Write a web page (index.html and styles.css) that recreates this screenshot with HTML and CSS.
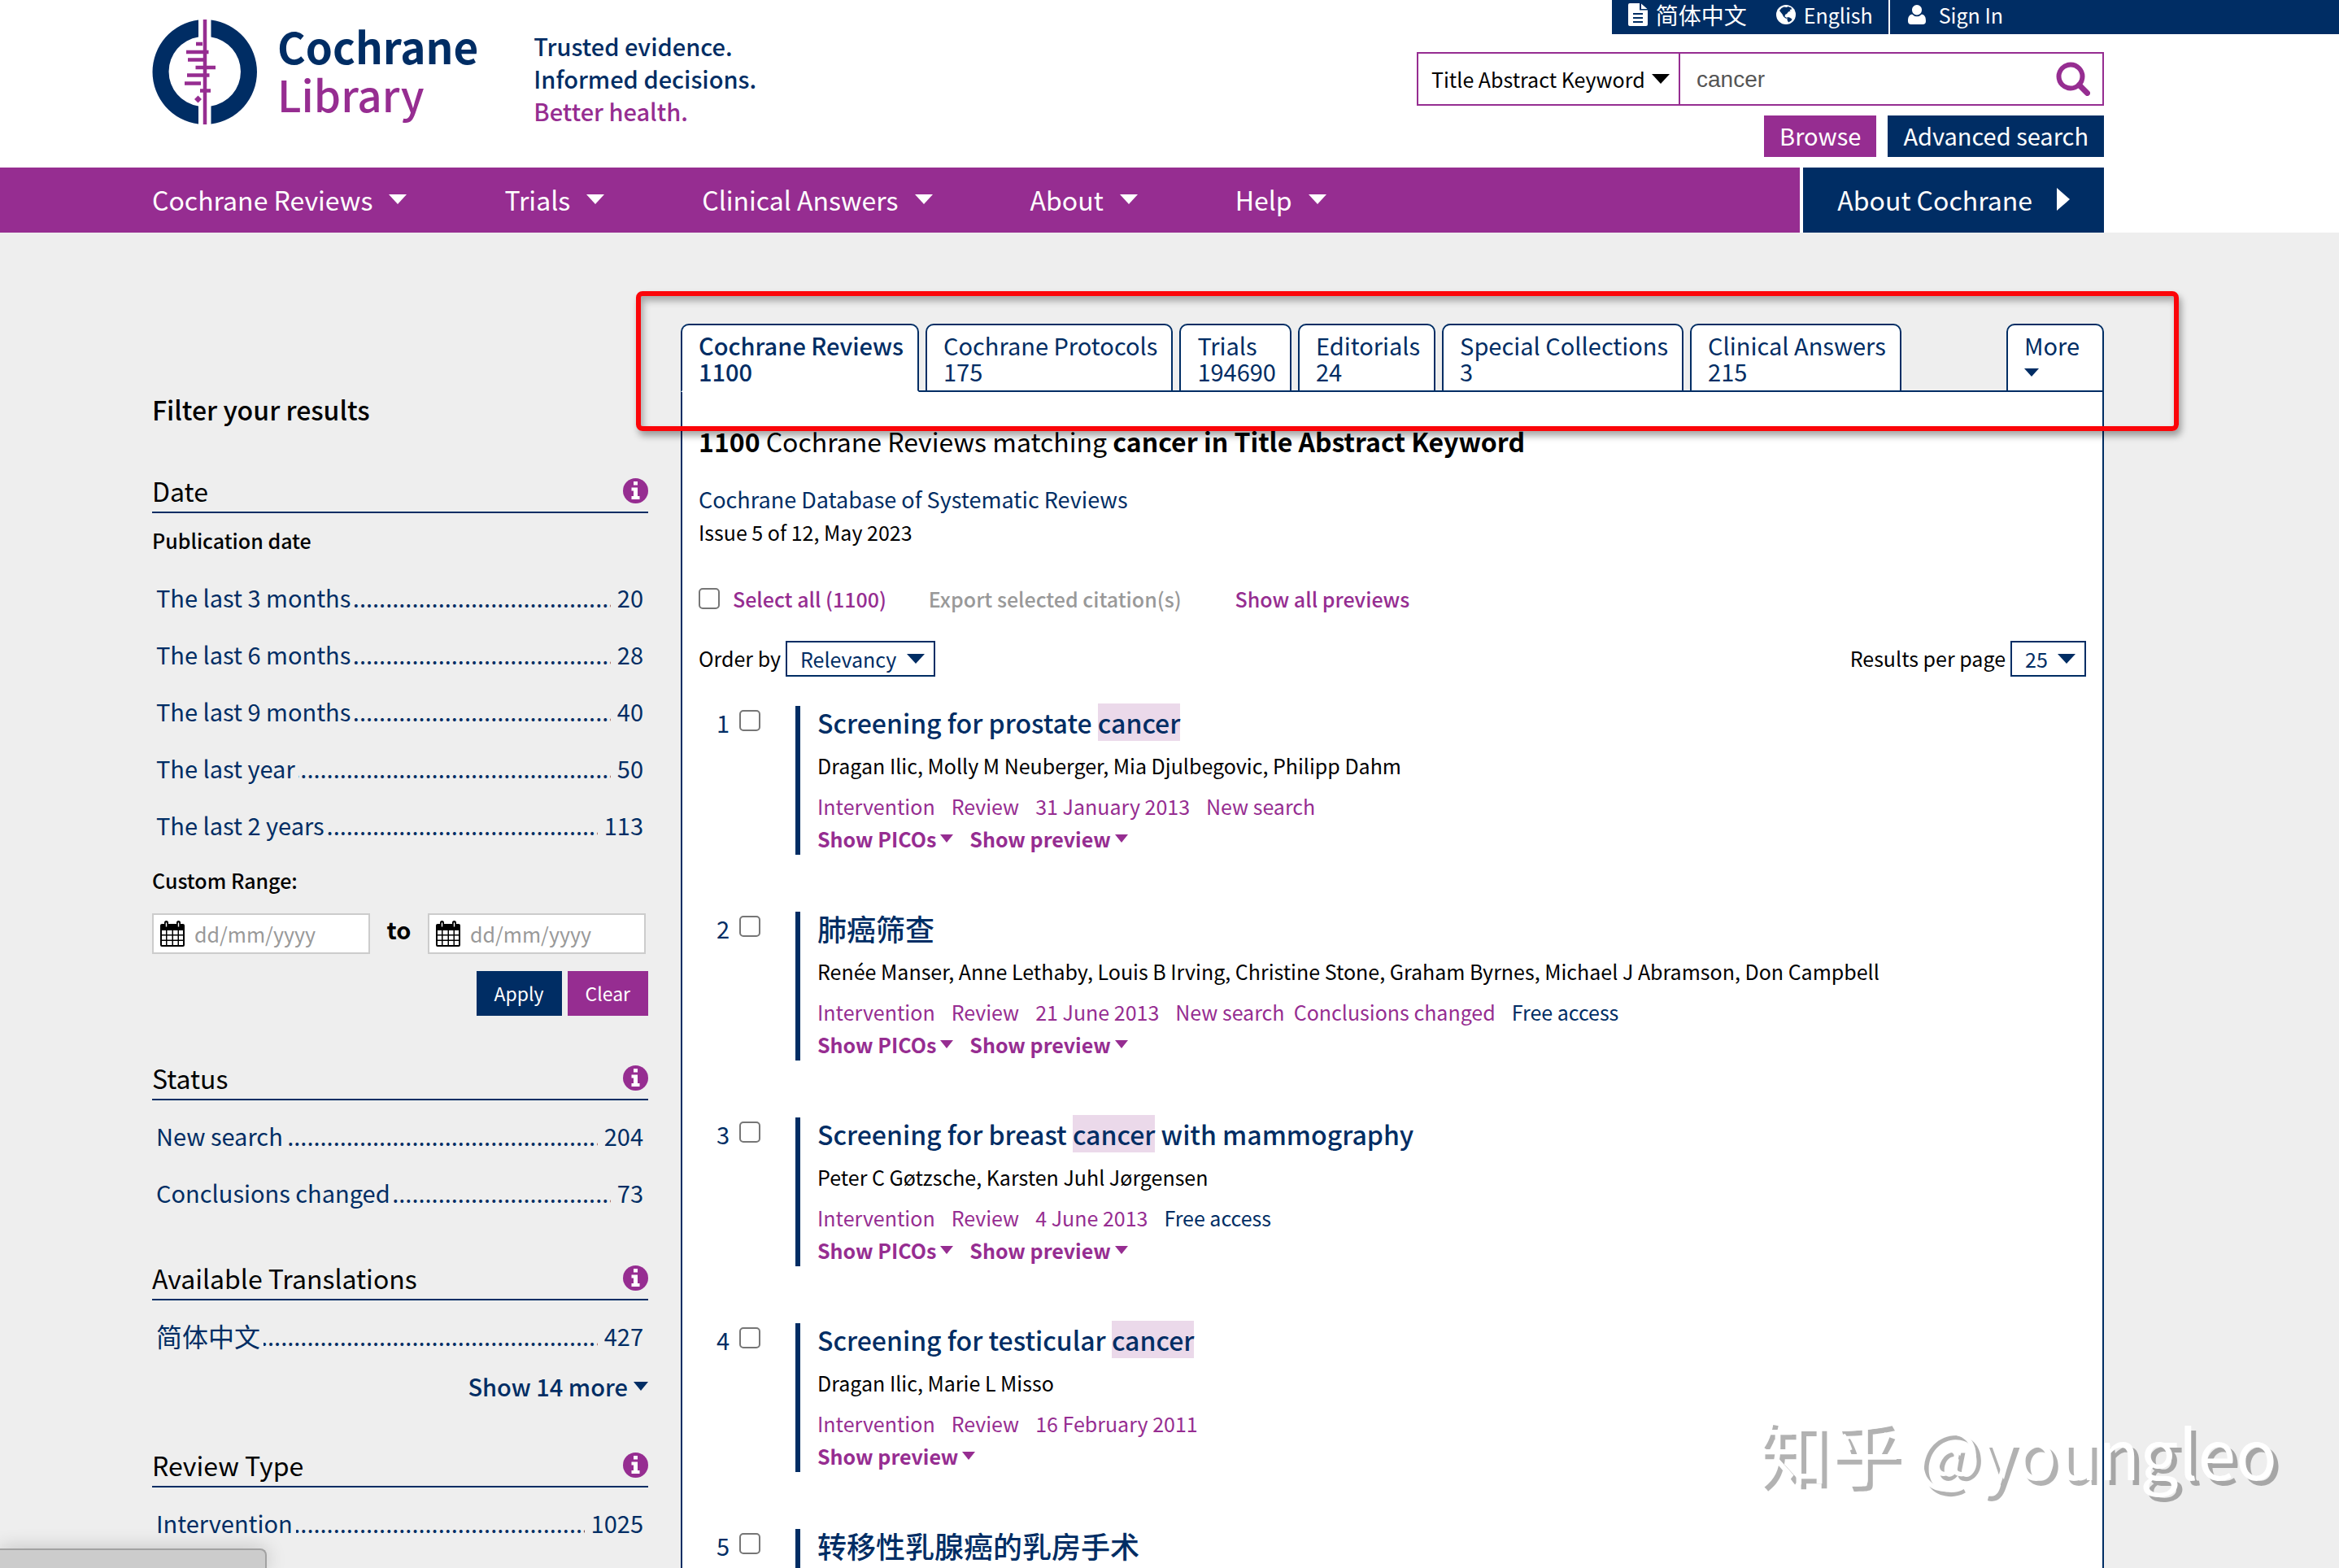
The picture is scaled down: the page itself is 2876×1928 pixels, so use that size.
FILE: index.html
```html
<!DOCTYPE html>
<html lang="en">
<head>
  <meta charset="utf-8">
  <title>Search results | Cochrane Library</title>
  <link rel="stylesheet" href="styles.css">
</head>
<body>
  <!-- shared icons -->
  <svg class="sprite" aria-hidden="true">
    <symbol id="info" viewBox="0 0 31 31">
      <circle cx="15.5" cy="15.5" r="15.5" fill="#962d91"/>
      <path d="M13 4h5v4.5h-5zM10.5 11.5h7.5v10.5h2.500v4h-10v-4h2.500v-6.500h-2.500z" fill="#fff"/>
    </symbol>
    <symbol id="calendar" viewBox="0 0 30 32">
      <path fill-rule="evenodd" d="M2 4h3V2.500a2.500 2.500 0 0 1 5 0V4h10V2.500a2.500 2.500 0 0 1 5 0V4h3a2 2 0 0 1 2 2v24a2 2 0 0 1-2 2H2a2 2 0 0 1-2-2V6a2 2 0 0 1 2-2zM2 12v5h5v-5zM8.500 12v5h6v-5zM16 12v5h5.500v-5zM23 12v5h5v-5zM2 18.500v5h5v-5zM8.500 18.500v5h6v-5zM16 18.500v5h5.500v-5zM23 18.500v5h5v-5zM2 25v5h5v-5zM8.500 25v5h6v-5zM16 25v5h5.500v-5zM23 25v5h5v-5zM6.800 2.500v5h1.400v-5zM21.800 2.500v5h1.400v-5z"/>
    </symbol>
  </svg>

  <header class="header">
    <a class="logo" href="#">
      <svg class="logo-mark" width="130" height="130" viewBox="0 0 130 130" aria-hidden="true">
        <path fill="#002d64" d="M57 .5A64.500 64.500 0 0 0 57 128.500V106.500A43 43 0 0 1 57 21.500zM72.500 .5A64.500 64.500 0 0 1 72.500 128.500V106.500A43 43 0 0 0 72.500 21.500z"/>
        <path stroke="#962d91" stroke-width="4.500" fill="none" d="M65 0V129M54 30H62M42 40H69.500M44 49.500H65M53.500 59H78M43 68.500H70.500M40 78.500H60M59 87.500H72"/>
        <path fill="#962d91" d="M56.500 93.500l4.500 4.500-4.500 4.500-4.500-4.500z"/>
      </svg>
      <span class="logo-text">Cochrane<br><span class="logo-library">Library</span></span>
    </a>
    <p class="tagline">Trusted evidence.<br>Informed decisions.<br><span class="purple">Better health.</span></p>

    <div class="header-right">
      <nav class="topbar" aria-label="Account">
        <a class="topbar-item" href="#">
          <svg width="24" height="28" viewBox="0 0 24 28" aria-hidden="true"><path fill="#fff" fill-rule="evenodd" d="M2 0h12v8.500h10V26a2 2 0 0 1-2 2H2a2 2 0 0 1-2-2V2a2 2 0 0 1 2-2zM16 .500L23.500 7H16zM6 12v2h12v-2zM6 17v2h12v-2zM6 22v2h12v-2z"/></svg>
          <span class="cjk-small">简体中文</span>
        </a>
        <a class="topbar-item topbar-lang" href="#">
          <svg width="24" height="24" viewBox="0 0 24 24" aria-hidden="true"><circle cx="12" cy="12" r="12" fill="#fff"/><path fill="#002d64" d="M6.500 4l3-1.500 3.500.5 1.500-1 4 1.500.5 2-2.500.5 1 1.500-2.500 1-2 2.500-2 1-.5 2.500 2 1 1 1.500-2-.5-2.500-2-1.500-3-2-2.500-1.500-2zM13.500 15l3 .5 3 2-1 2-3.500 2-1.500-3z"/></svg>
          <span>English</span>
        </a>
        <a class="topbar-item topbar-sign" href="#">
          <svg width="22" height="24" viewBox="0 0 22 24" aria-hidden="true"><path fill="#fff" d="M11 0a6 6 0 0 1 6 6.500a6 6 0 0 1-12 0A6 6 0 0 1 11 0zM5 11.500a8 8 0 0 0 12 0c4 1 5 4 5 8.500a4 4 0 0 1-4 4H4a4 4 0 0 1-4-4c0-4.500 1-7.500 5-8.500z"/></svg>
          <span>Sign In</span>
        </a>
      </nav>
      <form class="search">
        <div class="select-wrap search-field">
          <select class="search-select" aria-label="Search in">
            <option>Title Abstract Keyword</option>
          </select>
          <i class="caret"></i>
        </div>
        <input class="search-input" type="text" value="cancer" aria-label="Search term">
        <button class="search-btn" type="button" aria-label="Search">
          <svg width="42" height="42" viewBox="0 0 42 42" aria-hidden="true"><circle cx="18" cy="18" r="14.500" fill="none" stroke="#962d91" stroke-width="6"/><path d="M28.500 28.500L38.500 38.500" stroke="#962d91" stroke-width="7" stroke-linecap="round"/></svg>
        </button>
      </form>
      <div class="search-links">
        <a class="btn btn-purple" href="#">Browse</a>
        <a class="btn" href="#">Advanced search</a>
      </div>
    </div>
  </header>

  <div class="nav-row">
    <nav class="nav" aria-label="Main">
      <a href="#">Cochrane Reviews <i class="caret"></i></a>
      <a href="#">Trials <i class="caret"></i></a>
      <a href="#">Clinical Answers <i class="caret"></i></a>
      <a href="#">About <i class="caret"></i></a>
      <a href="#">Help <i class="caret"></i></a>
    </nav>
    <a class="nav-about" href="#">About Cochrane <i class="caret-right"></i></a>
  </div>

  <div class="content">
    <aside class="sidebar">
      <h2 class="filter-title">Filter your results</h2>

      <section class="facet">
        <h3 class="facet-title">Date <svg class="info"><use href="#info"/></svg></h3>
        <h4 class="facet-label">Publication date</h4>
        <ul class="facet-list">
          <li><a href="#"><span>The last 3 months</span><span>20</span></a></li>
          <li><a href="#"><span>The last 6 months</span><span>28</span></a></li>
          <li><a href="#"><span>The last 9 months</span><span>40</span></a></li>
          <li><a href="#"><span>The last year</span><span>50</span></a></li>
          <li><a href="#"><span>The last 2 years</span><span>113</span></a></li>
        </ul>
        <h4 class="facet-label">Custom Range:</h4>
        <form class="range">
          <div class="range-fields">
            <label class="date"><svg class="calendar"><use href="#calendar"/></svg><input type="text" placeholder="dd/mm/yyyy" aria-label="From date"></label>
            <span class="range-to">to</span>
            <label class="date"><svg class="calendar"><use href="#calendar"/></svg><input type="text" placeholder="dd/mm/yyyy" aria-label="To date"></label>
          </div>
          <div class="range-actions">
            <button class="range-btn" type="button">Apply</button>
            <button class="range-btn btn-purple" type="button">Clear</button>
          </div>
        </form>
      </section>

      <section class="facet">
        <h3 class="facet-title">Status <svg class="info"><use href="#info"/></svg></h3>
        <ul class="facet-list">
          <li><a href="#"><span>New search</span><span>204</span></a></li>
          <li><a href="#"><span>Conclusions changed</span><span>73</span></a></li>
        </ul>
      </section>

      <section class="facet">
        <h3 class="facet-title">Available Translations <svg class="info"><use href="#info"/></svg></h3>
        <ul class="facet-list">
          <li><a href="#"><span class="cjk">简体中文</span><span>427</span></a></li>
        </ul>
        <a class="show-more" href="#">Show 14 more <i class="caret"></i></a>
      </section>

      <section class="facet">
        <h3 class="facet-title">Review Type <svg class="info"><use href="#info"/></svg></h3>
        <ul class="facet-list">
          <li><a href="#"><span>Intervention</span><span>1025</span></a></li>
        </ul>
      </section>
    </aside>

    <main class="main">
      <nav class="tabs" aria-label="Result types">
        <a class="tab active" href="#">Cochrane Reviews<br>1100</a>
        <a class="tab" href="#">Cochrane Protocols<br>175</a>
        <a class="tab" href="#">Trials<br>194690</a>
        <a class="tab" href="#">Editorials<br>24</a>
        <a class="tab" href="#">Special Collections<br>3</a>
        <a class="tab" href="#">Clinical Answers<br>215</a>
        <a class="tab tab-more" href="#">More<br><i class="caret"></i></a>
      </nav>

      <div class="panel">
        <h1 class="summary"><b>1100</b> Cochrane Reviews matching <b>cancer in Title Abstract Keyword</b></h1>
        <a class="database" href="#">Cochrane Database of Systematic Reviews</a>
        <p class="issue">Issue 5 of 12, May 2023</p>

        <div class="actions">
          <input class="check" type="checkbox" id="select-all">
          <label class="select-all" for="select-all">Select all (1100)</label>
          <button class="action export" type="button" disabled>Export selected citation(s)</button>
          <button class="action" type="button">Show all previews</button>
        </div>

        <div class="sorting">
          <label for="order">Order by</label>
          <div class="select-wrap boxed">
            <select id="order"><option>Relevancy</option></select>
            <i class="caret"></i>
          </div>
          <label class="per-page" for="per-page">Results per page</label>
          <div class="select-wrap boxed">
            <select id="per-page"><option>25</option></select>
            <i class="caret"></i>
          </div>
        </div>

        <article class="result">
          <label class="number" for="r1">1</label>
          <input class="check" type="checkbox" id="r1">
          <div class="result-body">
            <h3><a href="#">Screening for prostate <mark>cancer</mark></a></h3>
            <p class="authors">Dragan Ilic, Molly M Neuberger, Mia Djulbegovic, Philipp Dahm</p>
            <p class="meta"><span>Intervention</span><span>Review</span><span>31 January 2013</span><span>New search</span></p>
            <div class="toggles"><button type="button">Show PICOs <i class="caret"></i></button><button type="button">Show preview <i class="caret"></i></button></div>
          </div>
        </article>

        <article class="result">
          <label class="number" for="r2">2</label>
          <input class="check" type="checkbox" id="r2">
          <div class="result-body">
            <h3 class="cjk-title"><a href="#">肺癌筛查</a></h3>
            <p class="authors">Renée Manser, Anne Lethaby, Louis B Irving, Christine Stone, Graham Byrnes, Michael J Abramson, Don Campbell</p>
            <p class="meta"><span>Intervention</span><span>Review</span><span>21 June 2013</span><span>New search&nbsp; Conclusions changed</span><span class="free">Free access</span></p>
            <div class="toggles"><button type="button">Show PICOs <i class="caret"></i></button><button type="button">Show preview <i class="caret"></i></button></div>
          </div>
        </article>

        <article class="result">
          <label class="number" for="r3">3</label>
          <input class="check" type="checkbox" id="r3">
          <div class="result-body">
            <h3><a href="#">Screening for breast <mark>cancer</mark> with mammography</a></h3>
            <p class="authors">Peter C Gøtzsche, Karsten Juhl Jørgensen</p>
            <p class="meta"><span>Intervention</span><span>Review</span><span>4 June 2013</span><span class="free">Free access</span></p>
            <div class="toggles"><button type="button">Show PICOs <i class="caret"></i></button><button type="button">Show preview <i class="caret"></i></button></div>
          </div>
        </article>

        <article class="result">
          <label class="number" for="r4">4</label>
          <input class="check" type="checkbox" id="r4">
          <div class="result-body">
            <h3><a href="#">Screening for testicular <mark>cancer</mark></a></h3>
            <p class="authors">Dragan Ilic, Marie L Misso</p>
            <p class="meta"><span>Intervention</span><span>Review</span><span>16 February 2011</span></p>
            <div class="toggles"><button type="button">Show preview <i class="caret"></i></button></div>
          </div>
        </article>

        <article class="result">
          <label class="number" for="r5">5</label>
          <input class="check" type="checkbox" id="r5">
          <div class="result-body">
            <h3 class="cjk-title"><a href="#">转移性乳腺癌的乳房手术</a></h3>
          </div>
        </article>
      </div>

      <div class="highlight-box"></div>
    </main>
  </div>

  <div class="status-bubble"></div>
  <div class="watermark"><span class="watermark-site">知乎</span> @youngleo</div>
</body>
</html>
```
FILE: styles.css
```css
* { box-sizing: border-box; }

body {
  margin: 0;
  height: 100vh;
  overflow: hidden;
  position: relative;
  display: flex;
  flex-direction: column;
  background: #eee;
  color: #000;
  font-family: "Noto Sans CJK SC", "Noto Sans", sans-serif;
  font-size: 25px;
  line-height: 40px;
}
h1, h2, h3, h4, p, ul { margin: 0; padding: 0; font-weight: 400; }
ul { list-style: none; }
a { color: #002d64; text-decoration: none; }
button, select, input { font: inherit; color: inherit; margin: 0; border-radius: 0; }
button, select { appearance: none; background: none; border: 0; padding: 0; }
.sprite { position: absolute; width: 0; height: 0; }
.purple { color: #962d91; }

.caret {
  display: inline-block;
  border: solid transparent;
  border-width: 12px 11px 0;
  border-top-color: currentColor;
}
.caret-right {
  border: solid transparent;
  border-width: 14px 0 14px 16px;
  border-left-color: currentColor;
}

/* header */
.header {
  display: flex;
  flex: none;
  background: #fff;
  height: 206px;
  padding-left: 187px;
}
.logo { display: flex; padding-top: 24px; }
.logo-text {
  margin-left: 24px;
  padding-top: 3px;
  font-size: 53px;
  font-weight: 700;
  line-height: 59px;
}
.logo-library { color: #962d91; font-weight: 500; }
.tagline {
  margin-left: 68px;
  padding-top: 36px;
  font-size: 29px;
  font-weight: 500;
  color: #002d64;
}
.header-right {
  display: flex;
  flex-direction: column;
  align-items: flex-end;
  margin-left: auto;
}
.topbar {
  display: flex;
  height: 42px;
  background: #002d64;
  padding-left: 20px;
  padding-right: 413px;
}
.topbar-item {
  display: flex;
  align-items: center;
  gap: 10px;
  height: 36px;
  color: #fff;
  margin-right: 36px;
}
.topbar-lang { margin-right: 19px; }
.topbar-sign {
  gap: 16px;
  height: 42px;
  padding-bottom: 6px;
  padding-left: 22px;
  margin-right: 0;
  border-left: 2px solid #fff;
}
.cjk-small { font-size: 28px; }
.search {
  display: flex;
  width: 845px;
  height: 66px;
  margin: 22px 289px 12px 0;
  border: 2px solid #962d91;
}
.select-wrap { display: inline-grid; align-items: center; }
.select-wrap select, .select-wrap .caret { grid-area: 1 / 1; }
.select-wrap .caret { justify-self: end; pointer-events: none; }
.search-field { width: 322px; padding: 0 11px 0 16px; border-right: 2px solid #962d91; }
.search-input {
  flex: 1;
  min-width: 0;
  border: 0;
  padding: 2px 20px 0;
  font-family: "Liberation Sans", Arial, sans-serif;
  font-size: 28px;
  color: #555;
}
.search-btn { display: flex; align-items: center; padding-right: 15px; }
.search-links { display: flex; gap: 14px; margin-right: 289px; }
.btn {
  padding: 0 19px 2px;
  font-size: 29px;
  line-height: 49px;
  background: #002d64;
  color: #fff;
}
.btn-purple { background: #962d91; }

/* main navigation */
.nav-row {
  display: flex;
  flex: none;
  gap: 4px;
  height: 80px;
  padding-right: 289px;
  background: #fff;
  font-size: 32px;
}
.nav {
  display: flex;
  align-items: center;
  flex: 1;
  gap: 120px;
  padding: 0 0 3px 187px;
  background: #962d91;
}
.nav a, .nav-about { display: flex; align-items: center; gap: 20px; color: #fff; }
.nav-about { background: #002d64; padding: 0 42px 3px; gap: 30px; }

/* page */
.content {
  display: flex;
  align-items: stretch;
  flex: 1;
  min-height: 0;
  padding: 0 289px 0 187px;
}
.sidebar { width: 610px; flex: none; padding-top: 193px; }
.filter-title {
  font-size: 32px;
  line-height: 48px;
  font-weight: 500;
  margin-bottom: 54px;
}
.facet { margin-bottom: 48px; }
.facet-title {
  display: flex;
  align-items: center;
  justify-content: space-between;
  font-size: 32px;
  line-height: 45px;
  padding-bottom: 3px;
  border-bottom: 2px solid #002d64;
  margin-bottom: 8px;
}
.info { width: 31px; height: 31px; }
.facet-label { font-weight: 500; line-height: 50px; margin: 8px 0 10px; }

/* dotted leader runs under the whole row, the texts cover it */
.facet-list a {
  display: grid;
  grid-template-columns: auto auto;
  justify-content: space-between;
  align-items: center;
  height: 70px;
  padding: 0 6px 0 5px;
  font-size: 29px;
}
.facet-list a::before {
  content: "..........................................................................................";
  grid-area: 1 / 1 / 2 / 3;
  width: 0;
  min-width: 100%;
  overflow: hidden;
  white-space: nowrap;
}
.facet-list span { grid-row: 1; background: #eee; padding-right: 4px; }
.facet-list span:first-of-type { grid-column: 1; }
.facet-list span:last-child { grid-column: 2; padding: 0 0 0 8px; }
.facet-list .cjk { font-size: 32px; }

.range { padding-top: 5px; margin-bottom: 54px; }
.range-fields { display: flex; align-items: center; }
.date {
  display: flex;
  align-items: center;
  width: 268px;
  height: 50px;
  background: #fff;
  border: 2px solid #ccc;
  padding-left: 8px;
}
.calendar { width: 30px; height: 32px; margin-right: 12px; flex: none; }
.date input { width: 100%; min-width: 0; border: 0; padding: 0; background: none; }
.date input::placeholder { color: #999; opacity: 1; }
.range-to { width: 71px; text-align: center; font-size: 29px; font-weight: 700; line-height: 40px; padding-bottom: 12px; }
.range-actions { display: flex; justify-content: flex-end; gap: 7px; margin-top: 20px; }
.range-btn { background: #002d64; color: #fff; font-size: 23px; line-height: 55px; padding: 0 22px; }
.range-btn.btn-purple { background: #962d91; }
.show-more {
  display: flex;
  align-items: center;
  justify-content: flex-end;
  gap: 7px;
  font-size: 29px;
  line-height: 54px;
  font-weight: 500;
}
.show-more .caret { border-width: 11px 9px 0; }

/* results */
.main {
  position: relative;
  display: flex;
  flex-direction: column;
  flex: 1;
  min-width: 0;
  margin-left: 40px;
  padding-top: 112px;
}
.tabs { display: flex; gap: 8px; flex: none; box-shadow: inset 0 -2px #002d64; }
.tab {
  height: 84px;
  padding: 8px 17px 0 20px;
  background: #fff;
  border: 2px solid #002d64;
  border-radius: 10px 10px 0 0;
  font-size: 29px;
  line-height: 32px;
}
.tab.active { font-weight: 500; border-bottom-color: #fff; }
.tab-more { margin-left: auto; padding-right: 28px; }
.tab-more .caret { border-width: 10px 9px 0; vertical-align: 6px; }
.panel {
  flex: 1;
  min-height: 0;
  background: #fff;
  border: solid #002d64;
  border-width: 0 2px;
  padding: 38px 20px 0;
}
.summary { font-size: 32px; line-height: 44px; }
.database { display: block; margin-top: 30px; font-size: 27px; }
.actions { display: flex; align-items: center; margin-top: 42px; font-weight: 500; color: #962d91; }
.check {
  appearance: none;
  width: 26px;
  height: 26px;
  flex: none;
  border: 2px solid #767676;
  border-radius: 5px;
  background: #fff;
}
.select-all { margin: 0 52px 0 16px; }
.action { font-weight: 500; }
.export { color: #999; margin-right: 66px; }
.sorting { display: flex; align-items: center; gap: 6px; margin: 30px 0 36px; }
.boxed {
  height: 44px;
  margin-top: 2px;
  border: 2px solid #002d64;
  padding: 0 11px 0 16px;
  color: #002d64;
}
.boxed select { padding-right: 34px; }
.per-page { margin-left: auto; }

.result { display: flex; margin-bottom: 70px; height: 183px; }
.number { width: 50px; padding-right: 12px; text-align: right; font-size: 29px; color: #002d64; }
.result .check { margin-top: 5px; }
.result-body { margin-left: 43px; padding-left: 21px; border-left: 6px solid #002d64; }
.result h3 { font-size: 32px; font-weight: 500; margin-bottom: 13px; }
.result h3.cjk-title { font-size: 36px; }
mark { background: #ebd9ea; color: inherit; }
.authors { margin-bottom: 10px; }
.meta, .toggles { display: flex; gap: 20px; color: #962d91; }
.free { color: #002d64; }
.toggles button { display: flex; align-items: center; gap: 5px; font-weight: 700; }
.toggles .caret { border-width: 10px 8px 0; }

/* overlays */
.highlight-box {
  position: absolute;
  top: 72px;
  left: -55px;
  right: -92px;
  height: 172px;
  border: 6px solid #fb0509;
  border-radius: 8px;
  box-shadow: 3px 6px 8px rgba(0,0,0,0.35), inset 3px 6px 8px rgba(0,0,0,0.3);
}
.status-bubble {
  position: absolute;
  left: 0;
  bottom: 0;
  width: 328px;
  height: 24px;
  background: #ccc;
  border: solid #a2a2a2;
  border-width: 2px 2px 0 0;
  border-radius: 0 8px 0 0;
  box-shadow: 0 0 24px rgba(0,0,0,0.2);
}
.watermark {
  position: absolute;
  right: 76px;
  bottom: 84px;
  font-size: 84px;
  line-height: 120px;
  color: #fff;
  text-shadow: 6px 6px rgba(0,0,0,0.3);
}
.watermark-site { font-size: 88px; }
```
